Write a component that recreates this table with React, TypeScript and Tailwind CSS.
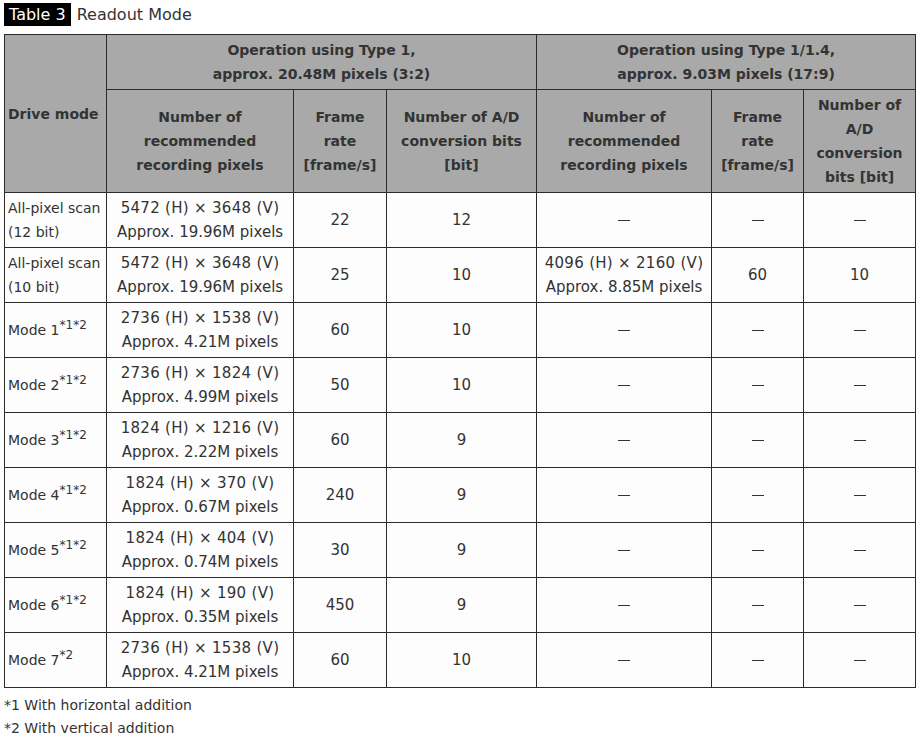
import React from "react";

type Row = {
  mode: string;
  sup?: string;
  px1: [string, string];
  fps1: string;
  bits1: string;
  px2?: [string, string];
  fps2?: string;
  bits2?: string;
};

const rows: Row[] = [
  { mode: "All-pixel scan (12 bit)", px1: ["5472 (H) × 3648 (V)", "Approx. 19.96M pixels"], fps1: "22", bits1: "12" },
  {
    mode: "All-pixel scan (10 bit)",
    px1: ["5472 (H) × 3648 (V)", "Approx. 19.96M pixels"],
    fps1: "25",
    bits1: "10",
    px2: ["4096 (H) × 2160 (V)", "Approx. 8.85M pixels"],
    fps2: "60",
    bits2: "10",
  },
  { mode: "Mode 1", sup: "*1*2", px1: ["2736 (H) × 1538 (V)", "Approx. 4.21M pixels"], fps1: "60", bits1: "10" },
  { mode: "Mode 2", sup: "*1*2", px1: ["2736 (H) × 1824 (V)", "Approx. 4.99M pixels"], fps1: "50", bits1: "10" },
  { mode: "Mode 3", sup: "*1*2", px1: ["1824 (H) × 1216 (V)", "Approx. 2.22M pixels"], fps1: "60", bits1: "9" },
  { mode: "Mode 4", sup: "*1*2", px1: ["1824 (H) × 370 (V)", "Approx. 0.67M pixels"], fps1: "240", bits1: "9" },
  { mode: "Mode 5", sup: "*1*2", px1: ["1824 (H) × 404 (V)", "Approx. 0.74M pixels"], fps1: "30", bits1: "9" },
  { mode: "Mode 6", sup: "*1*2", px1: ["1824 (H) × 190 (V)", "Approx. 0.35M pixels"], fps1: "450", bits1: "9" },
  { mode: "Mode 7", sup: "*2", px1: ["2736 (H) × 1538 (V)", "Approx. 4.21M pixels"], fps1: "60", bits1: "10" },
];

const th = "border border-[#2b2b2b] bg-[#a9a9a9] font-bold text-center align-middle px-1";
const td = "border border-[#2b2b2b] bg-[#fdfdfd] text-center align-middle px-1 text-[15px]";

function Dash() {
  return <span className="inline-block w-[12px] h-[1px] bg-[#333] align-middle" />;
}

export default function App() {
  return (
    <div className="bg-white w-[919px] h-[737px] px-[4px] pt-[3px] text-[#333] text-[14px] leading-[24px] [font-family:'DejaVu_Sans',Verdana,sans-serif]">
      {/* Caption */}
      <div className="flex items-center h-[23px] text-[16px]">
        <span className="bg-black text-white px-[5px] h-[23px] leading-[23px]">Table 3</span>
        <span className="ml-[6px]">Readout Mode</span>
      </div>

      {/* Table */}
      <table className="mt-[8px] border-collapse table-fixed w-[912px]">
        <colgroup>
          <col className="w-[102px]" />
          <col className="w-[187px]" />
          <col className="w-[93px]" />
          <col className="w-[150px]" />
          <col className="w-[175px]" />
          <col className="w-[92px]" />
          <col className="w-[112px]" />
        </colgroup>
        <thead>
          <tr className="h-[55px]">
            <th rowSpan={2} className={th + " text-left px-[3px]"}>Drive mode</th>
            <th colSpan={3} className={th}>
              Operation using Type 1,
              <br />
              approx. 20.48M pixels (3:2)
            </th>
            <th colSpan={3} className={th}>
              Operation using Type 1/1.4,
              <br />
              approx. 9.03M pixels (17:9)
            </th>
          </tr>
          <tr className="h-[103px]">
            <th className={th}>Number of recommended recording pixels</th>
            <th className={th}>Frame rate [frame/s]</th>
            <th className={th}>Number of A/D conversion bits [bit]</th>
            <th className={th}>Number of recommended recording pixels</th>
            <th className={th}>Frame rate [frame/s]</th>
            <th className={th}>Number of A/D conversion bits [bit]</th>
          </tr>
        </thead>
        <tbody>
          {rows.map((r, i) => (
            <tr key={i} className="h-[55px]">
              <td className="border border-[#2b2b2b] bg-[#fdfdfd] text-left align-middle px-[3px]">
                {r.mode}
                {r.sup && <sup className="text-[12px]">{r.sup}</sup>}
              </td>
              <td className={td}>
                <span className="tracking-[0.3px]">{r.px1[0]}</span>
                <br />
                {r.px1[1]}
              </td>
              <td className={td}>{r.fps1}</td>
              <td className={td}>{r.bits1}</td>
              <td className={td}>
                {r.px2 ? (
                  <>
                    <span className="tracking-[0.3px]">{r.px2[0]}</span>
                    <br />
                    {r.px2[1]}
                  </>
                ) : (
                  <Dash />
                )}
              </td>
              <td className={td}>{r.fps2 ?? <Dash />}</td>
              <td className={td}>{r.bits2 ?? <Dash />}</td>
            </tr>
          ))}
        </tbody>
      </table>

      {/* Footnotes */}
      <div className="mt-[6px]">
        <p className="leading-[23px]">*1 With horizontal addition</p>
        <p className="leading-[23px]">*2 With vertical addition</p>
      </div>
    </div>
  );
}
